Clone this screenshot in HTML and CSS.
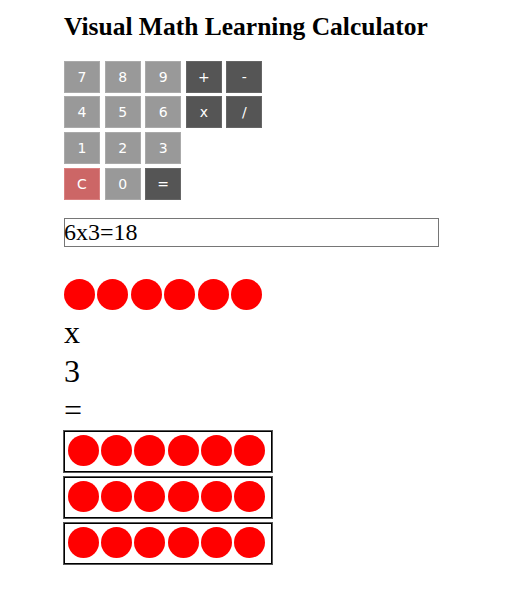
FILE: index.html
```html
<!DOCTYPE html>
<html>
<head>
<meta charset="utf-8">
<title>Visual Math Learning Calculator</title>
<link rel="stylesheet" href="styles.css">
</head>
<body>
<div class="app">
  <h2 class="title">Visual Math Learning Calculator</h2>
  <div class="keypad">
    <button class="key num">7</button>
    <button class="key num">8</button>
    <button class="key num">9</button>
    <button class="key op">+</button>
    <button class="key op">-</button>
    <button class="key num">4</button>
    <button class="key num">5</button>
    <button class="key num">6</button>
    <button class="key op">x</button>
    <button class="key op">/</button>
    <button class="key num">1</button>
    <button class="key num">2</button>
    <button class="key num">3</button>
    <span class="blank"></span>
    <span class="blank"></span>
    <button class="key clear">C</button>
    <button class="key num">0</button>
    <button class="key op">=</button>
  </div>
  <div class="display">6x3=18</div>
  <div class="visual">
    <div class="dots">
      <span class="dot"></span><span class="dot"></span><span class="dot"></span><span class="dot"></span><span class="dot"></span><span class="dot"></span>
    </div>
    <div class="sym">x</div>
    <div class="sym">3</div>
    <div class="sym">=</div>
    <div class="groups">
      <div class="group dots">
        <span class="dot"></span><span class="dot"></span><span class="dot"></span><span class="dot"></span><span class="dot"></span><span class="dot"></span>
      </div>
      <div class="group dots">
        <span class="dot"></span><span class="dot"></span><span class="dot"></span><span class="dot"></span><span class="dot"></span><span class="dot"></span>
      </div>
      <div class="group dots">
        <span class="dot"></span><span class="dot"></span><span class="dot"></span><span class="dot"></span><span class="dot"></span><span class="dot"></span>
      </div>
    </div>
  </div>
</div>
</body>
</html>
```

FILE: styles.css
```css
html, body {
  margin: 0;
  padding: 0;
  background: #ffffff;
}

.app {
  width: 377px;
  margin: 0 auto;
  font-family: "Liberation Serif", "Times New Roman", serif;
  color: #000;
}

.title {
  margin: 13px 0 19px;
  font-size: 25.5px;
  font-weight: bold;
  line-height: 28.5px;
}

.keypad {
  display: grid;
  grid-template-columns: repeat(5, 36px);
  grid-auto-rows: 32px;
  column-gap: 4.6px;
  row-gap: 3.8px;
}

.key {
  margin: 0;
  padding: 0;
  font-family: "DejaVu Sans", Verdana, sans-serif;
  font-size: 14px;
  font-weight: normal;
  color: #ffffff;
  border: 1px solid #a6a6a6;
  cursor: pointer;
}

.num {
  background: #999999;
  border-color: #aaaaaa;
}

.op {
  background: #555555;
  border-color: #666666;
}

.clear {
  background: #cc6666;
  border-color: #d98080;
}

.display {
  margin-top: 18px;
  width: 373px;
  height: 27px;
  border: 1px solid #767676;
  padding: 0;
  font-size: 24px;
  line-height: 27px;
  text-indent: -1px;
}

.visual {
  margin-top: 32.5px;
}

.dots {
  display: flex;
  gap: 2.4px;
}

.dot {
  width: 31px;
  height: 31px;
  border-radius: 50%;
  background: #ff0000;
  flex: none;
}

.sym {
  font-size: 32px;
  line-height: 38.7px;
}

.visual > .dots + .sym {
  margin-top: 3px;
}

.groups {
  display: flex;
  flex-direction: column;
  gap: 3px;
  margin-left: -1px;
}

.group {
  width: 203.5px;
  height: 36px;
  border: 2px solid #000;
  padding: 3px 0 0 2.5px;
  outline: 1px solid #555;
  outline-offset: -1px;
}
```
